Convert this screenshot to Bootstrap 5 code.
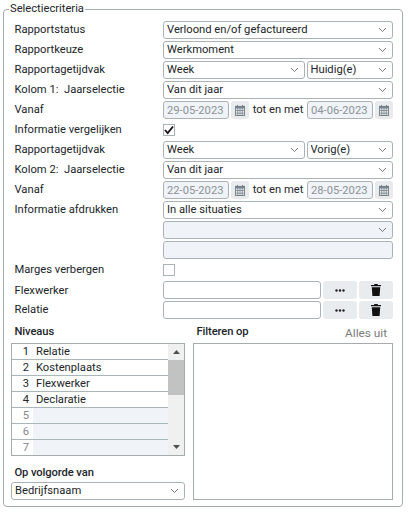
<!DOCTYPE html>
<html lang="nl">
<head>
<meta charset="utf-8">
<title>Selectiecriteria</title>
<link href="https://cdn.jsdelivr.net/npm/bootstrap@5.3.0/dist/css/bootstrap.min.css" rel="stylesheet">
<style>
html,body{background:#fff;height:100%;overflow:hidden}
body{font-family:Roboto,"Liberation Sans",sans-serif;font-size:11.2px;line-height:18px;color:#212529}
.crit-box{margin:0 0 0 3px;width:400px;height:507px;border:1px solid #a6abae;border-radius:4px;padding:3px 9px 6px 7px;box-sizing:border-box;min-width:0}
.crit-box legend{float:none;width:auto;font-size:11.2px;line-height:18px;margin:0 0 0 -2.5px;padding:0 1.5px;font-weight:400}
.crit-row{height:18px;margin-bottom:2px;gap:2px}
.crit-label{width:150px;flex:none;padding-left:3.5px;white-space:nowrap}
.crit-low{padding-top:2px}
.crit-field{flex:1 1 0;min-width:0;gap:2px}
.form-select.crit-ctl,.form-control.crit-ctl{font-size:11.2px;line-height:16px;height:18px;min-height:0;padding:0 3px;border:1px solid #a9b2b7;border-radius:3px;color:#212529;box-shadow:none;font-family:inherit}
.form-select.crit-ctl{padding-right:18px;background-size:9px 6px;background-position:right 5px center;background-image:url("data:image/svg+xml,%3csvg xmlns='http://www.w3.org/2000/svg' viewBox='0 0 9 6'%3e%3cpath fill='none' stroke='%23555' stroke-width='.8' d='M1 1l3.500 3.500L8 1'/%3e%3c/svg%3e")}
.crit-ctl:disabled,.crit-ctl[readonly]{background-color:#f0f4f8;color:#8a9296}
.form-control.crit-ctl[readonly]{color:#8a9296}
.crit-date{width:66px;flex:none}
.crit-between{width:54px;flex:none;text-align:center;white-space:nowrap}
.crit-calbtn{width:18px;height:18px;flex:none;padding:0;border:0;border-radius:3px;background:#e7ebee;display:flex;align-items:center;justify-content:center}
.crit-sel-a{width:141.5px;flex:none}
.crit-sel-b{flex:1 1 0;min-width:0}
.crit-btn{width:34px;height:18px;flex:none;padding:0;border:0;border-radius:3px;background:#e9ecef;display:flex;align-items:center;justify-content:center}
.crit-check{width:12px;height:12px;flex:none;border:1px solid #a9b2b7;background:#fff;display:flex;align-items:center;justify-content:center}
.crit-heads{height:22px}
.crit-left{width:174px;flex:none}
.crit-right{margin-left:8px;flex:1 1 0;min-width:0}
.crit-strong{font-weight:500;padding-left:3.5px;padding-top:2px;line-height:18px;letter-spacing:-.1px}
.crit-off{color:#7b7b7b;margin-left:auto;margin-right:6px;margin-top:3px;font-size:11.8px}
.crit-list{height:113px;border:1px solid #a6abae;overflow:hidden;background:#fff}
.crit-items{flex:1 1 0;min-width:0}
.crit-item{height:16px;line-height:15px;border-bottom:1px solid #aab5bc;flex:none}
.crit-num{width:21px;flex:none;text-align:right;padding-right:4px;background:#fff}
.crit-name{flex:1 1 0;padding-left:3px}
.crit-empty .crit-num{color:#888}
.crit-empty .crit-name{background:#f0f4f8}
.crit-scroll{width:16px;flex:none;background:#f0f0f0}
.crit-arrow{height:16px;display:flex;align-items:center;justify-content:center;flex:none}
.crit-thumb{height:35px;background:#c2c2c2;flex:none}
.crit-order{font-weight:500;padding-left:3.5px;margin-top:8px;height:18px;letter-spacing:-.1px}
.crit-filter{height:157px;border:1px solid #a6abae;background:#fff}
</style>
</head>
<body>
<fieldset class="crit-box">
<legend>Selectiecriteria</legend>

<div class="d-flex align-items-center crit-row"><div class="crit-label">Rapportstatus</div><div class="d-flex crit-field"><select class="form-select crit-ctl"><option>Verloond en/of gefactureerd</option></select></div></div>
<div class="d-flex align-items-center crit-row"><div class="crit-label">Rapportkeuze</div><div class="d-flex crit-field"><select class="form-select crit-ctl"><option>Werkmoment</option></select></div></div>
<div class="d-flex align-items-center crit-row"><div class="crit-label">Rapportagetijdvak</div><div class="d-flex crit-field"><select class="form-select crit-ctl crit-sel-a"><option>Week</option></select><select class="form-select crit-ctl crit-sel-b"><option>Huidig(e)</option></select></div></div>
<div class="d-flex align-items-center crit-row"><div class="crit-label">Kolom 1:&nbsp; Jaarselectie</div><div class="d-flex crit-field"><select class="form-select crit-ctl"><option>Van dit jaar</option></select></div></div>
<div class="d-flex align-items-center crit-row"><div class="crit-label">Vanaf</div><div class="d-flex crit-field"><input class="form-control crit-ctl crit-date" readonly value="29-05-2023"><span class="crit-calbtn"><svg width="10" height="11" viewBox="0 0 11 11" preserveAspectRatio="none"><path fill="#77828a" fill-rule="evenodd" d="M2 0h1.500v1h4V0H9v1h2v10H0V1h2zM1 3.500v1.700h1.700V3.500zm2.500 0v1.700h1.600V3.500zm2.400 0v1.700h1.600V3.500zm2.400 0v1.700H10V3.500zM1 6v1.700h1.700V6zm2.500 0v1.700h1.600V6zm2.400 0v1.700h1.600V6zm2.400 0v1.700H10V6zM1 8.500V10h1.700V8.500zm2.500 0V10h1.600V8.500zm2.400 0V10h1.600V8.500zm2.400 0V10H10V8.500z"/></svg></span><span class="crit-between">tot en met</span><input class="form-control crit-ctl crit-date" readonly value="04-06-2023"><span class="crit-calbtn"><svg width="10" height="11" viewBox="0 0 11 11" preserveAspectRatio="none"><path fill="#77828a" fill-rule="evenodd" d="M2 0h1.500v1h4V0H9v1h2v10H0V1h2zM1 3.500v1.700h1.700V3.500zm2.500 0v1.700h1.600V3.500zm2.400 0v1.700h1.600V3.500zm2.400 0v1.700H10V3.500zM1 6v1.700h1.700V6zm2.500 0v1.700h1.600V6zm2.400 0v1.700h1.600V6zm2.400 0v1.700H10V6zM1 8.500V10h1.700V8.500zm2.500 0V10h1.600V8.500zm2.400 0V10h1.600V8.500zm2.400 0V10H10V8.500z"/></svg></span></div></div>
<div class="d-flex align-items-center crit-row"><div class="crit-label">Informatie vergelijken</div><div class="d-flex crit-field"><span class="crit-check"><svg width="10" height="10" viewBox="0 0 10 10"><path fill="none" stroke="#111" stroke-width="1.800" d="M1 5l2.700 3L9 1.500"/></svg></span></div></div>
<div class="d-flex align-items-center crit-row"><div class="crit-label">Rapportagetijdvak</div><div class="d-flex crit-field"><select class="form-select crit-ctl crit-sel-a"><option>Week</option></select><select class="form-select crit-ctl crit-sel-b"><option>Vorig(e)</option></select></div></div>
<div class="d-flex align-items-center crit-row"><div class="crit-label">Kolom 2:&nbsp; Jaarselectie</div><div class="d-flex crit-field"><select class="form-select crit-ctl"><option>Van dit jaar</option></select></div></div>
<div class="d-flex align-items-center crit-row"><div class="crit-label">Vanaf</div><div class="d-flex crit-field"><input class="form-control crit-ctl crit-date" readonly value="22-05-2023"><span class="crit-calbtn"><svg width="10" height="11" viewBox="0 0 11 11" preserveAspectRatio="none"><path fill="#77828a" fill-rule="evenodd" d="M2 0h1.500v1h4V0H9v1h2v10H0V1h2zM1 3.500v1.700h1.700V3.500zm2.500 0v1.700h1.600V3.500zm2.400 0v1.700h1.600V3.500zm2.400 0v1.700H10V3.500zM1 6v1.700h1.700V6zm2.500 0v1.700h1.600V6zm2.400 0v1.700h1.600V6zm2.400 0v1.700H10V6zM1 8.500V10h1.700V8.500zm2.500 0V10h1.600V8.500zm2.400 0V10h1.600V8.500zm2.400 0V10H10V8.500z"/></svg></span><span class="crit-between">tot en met</span><input class="form-control crit-ctl crit-date" readonly value="28-05-2023"><span class="crit-calbtn"><svg width="10" height="11" viewBox="0 0 11 11" preserveAspectRatio="none"><path fill="#77828a" fill-rule="evenodd" d="M2 0h1.500v1h4V0H9v1h2v10H0V1h2zM1 3.500v1.700h1.700V3.500zm2.500 0v1.700h1.600V3.500zm2.400 0v1.700h1.600V3.500zm2.400 0v1.700H10V3.500zM1 6v1.700h1.700V6zm2.500 0v1.700h1.600V6zm2.400 0v1.700h1.600V6zm2.400 0v1.700H10V6zM1 8.500V10h1.700V8.500zm2.500 0V10h1.600V8.500zm2.400 0V10h1.600V8.500zm2.400 0V10H10V8.500z"/></svg></span></div></div>
<div class="d-flex align-items-center crit-row"><div class="crit-label">Informatie afdrukken</div><div class="d-flex crit-field"><select class="form-select crit-ctl"><option>In alle situaties</option></select></div></div>
<div class="d-flex align-items-center crit-row"><div class="crit-label"></div><div class="d-flex crit-field"><select class="form-select crit-ctl" disabled><option></option></select></div></div>
<div class="d-flex align-items-center crit-row"><div class="crit-label"></div><div class="d-flex crit-field"><input class="form-control crit-ctl" readonly></div></div>
<div class="d-flex align-items-center crit-row"><div class="crit-label">Marges verbergen</div><div class="d-flex crit-field"><span class="crit-check"></span></div></div>
<div class="d-flex align-items-center crit-row"><div class="crit-label crit-low">Flexwerker</div><div class="d-flex crit-field"><input class="form-control crit-ctl"><button class="crit-btn" type="button"><svg width="10" height="3" viewBox="0 0 10 3"><g fill="#222"><circle cx="1.500" cy="1.500" r="1.200"/><circle cx="5" cy="1.500" r="1.200"/><circle cx="8.500" cy="1.500" r="1.200"/></g></svg></button><button class="crit-btn" type="button"><svg width="10" height="12" viewBox="0 0 10 12"><path fill="#111" d="M3.500 0h3l.5 1h3v1.300H0V1h3zM.8 3.300h8.400L8.600 12H1.400z"/></svg></button></div></div>
<div class="d-flex align-items-center crit-row"><div class="crit-label">Relatie</div><div class="d-flex crit-field"><input class="form-control crit-ctl"><button class="crit-btn" type="button"><svg width="10" height="3" viewBox="0 0 10 3"><g fill="#222"><circle cx="1.500" cy="1.500" r="1.200"/><circle cx="5" cy="1.500" r="1.200"/><circle cx="8.500" cy="1.500" r="1.200"/></g></svg></button><button class="crit-btn" type="button"><svg width="10" height="12" viewBox="0 0 10 12"><path fill="#111" d="M3.500 0h3l.5 1h3v1.300H0V1h3zM.8 3.300h8.400L8.600 12H1.400z"/></svg></button></div></div>

<div class="d-flex crit-heads">
  <div class="crit-left crit-strong">Niveaus</div>
  <div class="crit-right d-flex"><span class="crit-strong">Filteren op</span><span class="crit-off">Alles uit</span></div>
</div>
<div class="d-flex">
  <div class="crit-left">
    <div class="d-flex crit-list">
      <div class="d-flex flex-column crit-items">
        <div class="d-flex crit-item"><span class="crit-num">1</span><span class="crit-name">Relatie</span></div>
        <div class="d-flex crit-item"><span class="crit-num">2</span><span class="crit-name">Kostenplaats</span></div>
        <div class="d-flex crit-item"><span class="crit-num">3</span><span class="crit-name">Flexwerker</span></div>
        <div class="d-flex crit-item"><span class="crit-num">4</span><span class="crit-name">Declaratie</span></div>
        <div class="d-flex crit-item crit-empty"><span class="crit-num">5</span><span class="crit-name"></span></div>
        <div class="d-flex crit-item crit-empty"><span class="crit-num">6</span><span class="crit-name"></span></div>
        <div class="d-flex crit-item crit-empty"><span class="crit-num">7</span><span class="crit-name"></span></div>
      </div>
      <div class="d-flex flex-column crit-scroll">
        <span class="crit-arrow"><svg width="7" height="4" viewBox="0 0 7 4"><path fill="#505050" d="M3.500 0L7 4H0z"/></svg></span>
        <span class="crit-thumb"></span>
        <span class="flex-grow-1"></span>
        <span class="crit-arrow"><svg width="7" height="4" viewBox="0 0 7 4"><path fill="#505050" d="M3.500 4L7 0H0z"/></svg></span>
      </div>
    </div>
    <div class="crit-order">Op volgorde van</div>
    <select class="form-select crit-ctl"><option>Bedrijfsnaam</option></select>
  </div>
  <div class="crit-right"><div class="crit-filter"></div></div>
</div>
</fieldset>
<script src="https://cdn.jsdelivr.net/npm/bootstrap@5.3.0/dist/js/bootstrap.bundle.min.js"></script>
</body>
</html>
